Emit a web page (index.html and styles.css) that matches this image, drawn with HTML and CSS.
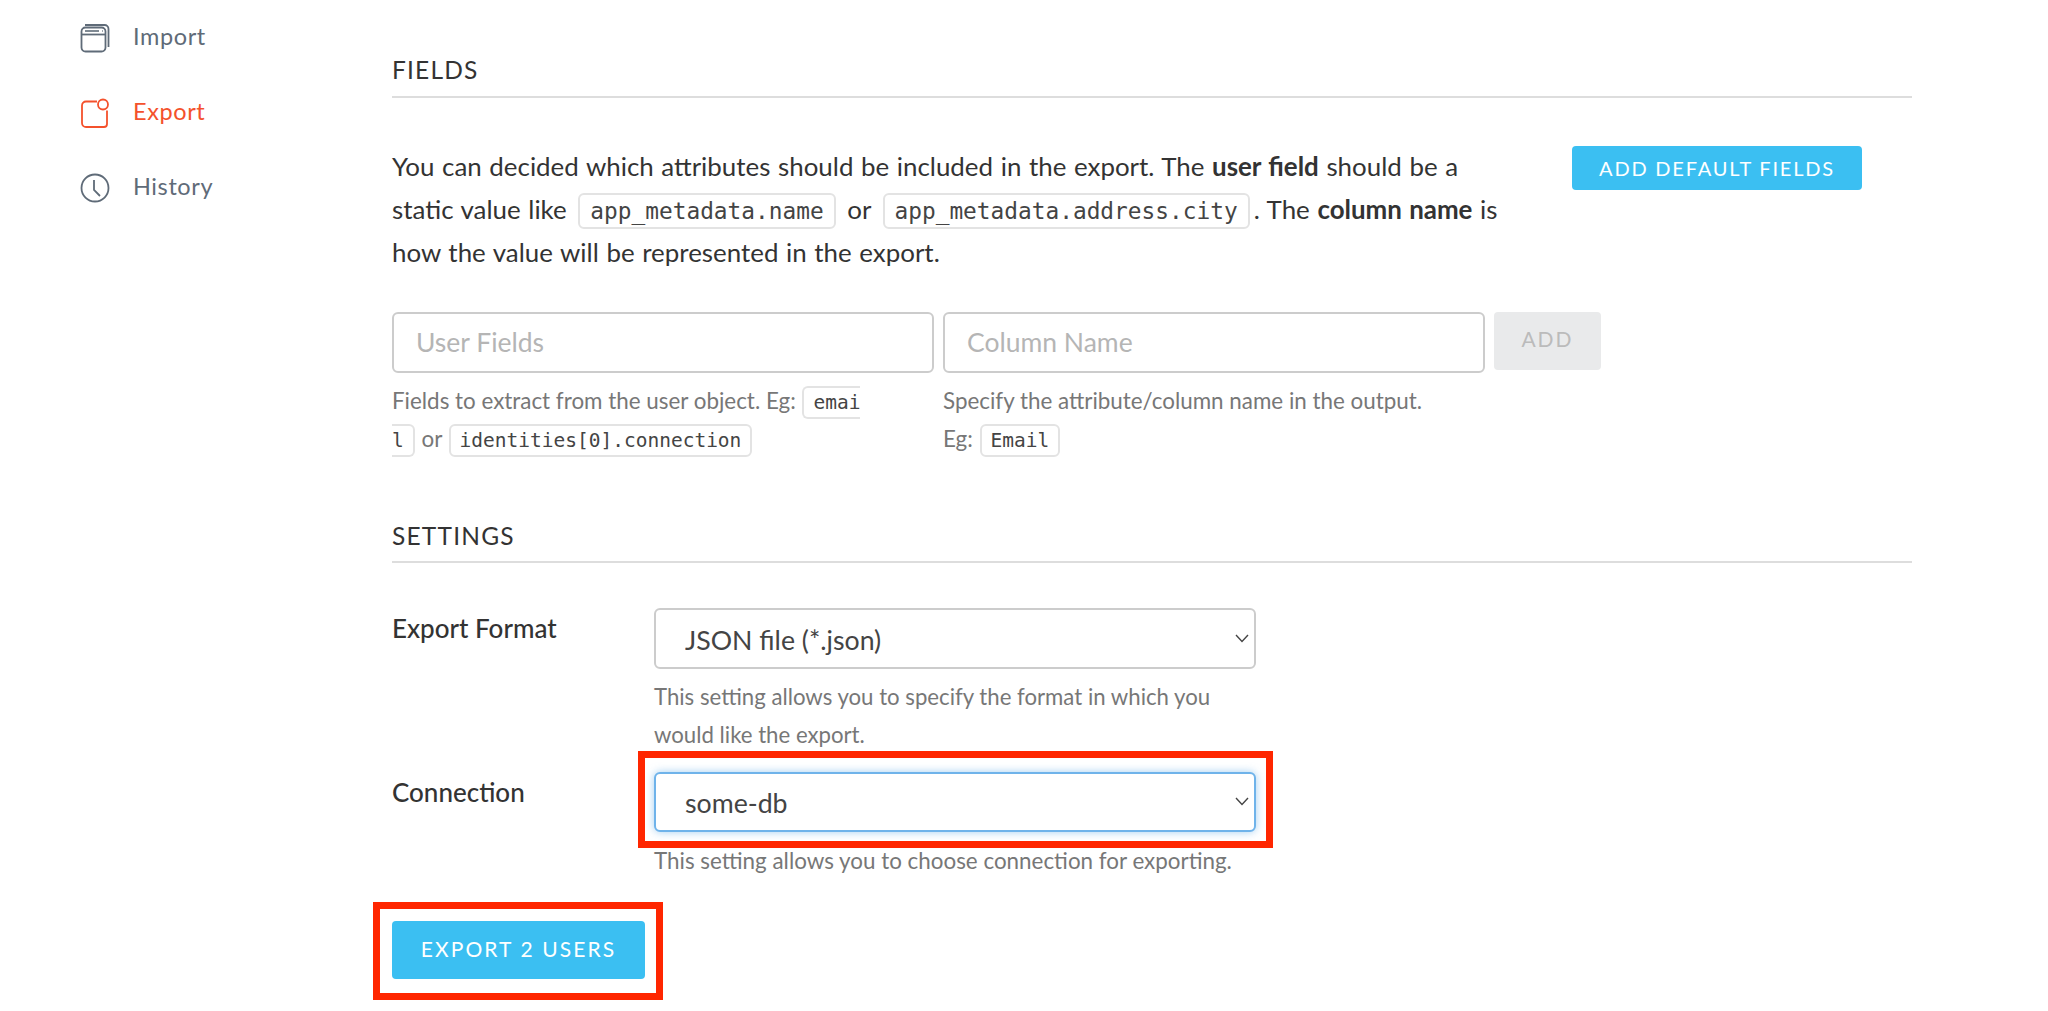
FILE: index.html
```html
<!DOCTYPE html>
<html lang="en">
<head>
<meta charset="utf-8">
<title>Export</title>
<link rel="stylesheet" href="styles.css">
</head>
<body>
<div class="page">
  <nav class="sidebar">
    <a class="nav-item">
      <svg class="nav-icon" viewBox="0 0 30 30" fill="none" stroke="currentColor" stroke-width="1.8"><rect x="1.5" y="4.5" width="24" height="24" rx="4"/><path d="M1.5 11.5h24"/><path d="M5 8h14" stroke-width="1.6"/><path d="M22 8h.8" stroke-width="1.6"/><path d="M5 2h19.5a4 4 0 0 1 4 4v18"/></svg>
      <span class="nav-label">Import</span>
    </a>
    <a class="nav-item nav-active">
      <svg class="nav-icon" viewBox="0 0 30 30" fill="none" stroke="currentColor" stroke-width="1.8"><path d="M17 3.5H6a4 4 0 0 0-4 4V25a4 4 0 0 0 4 4h18a3 3 0 0 0 3-3V12.5"/><circle cx="23" cy="6.5" r="5"/></svg>
      <span class="nav-label">Export</span>
    </a>
    <a class="nav-item">
      <svg class="nav-icon" viewBox="0 0 30 30" fill="none" stroke="currentColor" stroke-width="1.8"><circle cx="15" cy="15" r="13.5"/><path d="M14 7v10l6 6"/></svg>
      <span class="nav-label">History</span>
    </a>
  </nav>
  <main class="content">
    <h2 class="section-title first">FIELDS</h2>
    <div class="intro">
      <p class="intro-text">You can decided which attributes should be included in the export. The <strong>user field</strong> should be a static value like <code class="code">app_metadata.name</code> or <code class="code">app_metadata.address.city</code>. The <strong>column name</strong> is how the value will be represented in the export.</p>
      <button class="btn btn-small">ADD DEFAULT FIELDS</button>
    </div>
    <div class="field-row">
      <div class="field-col">
        <input class="input" placeholder="User Fields">
        <p class="help help-narrow">Fields to extract from the user object. Eg: <code class="code code-small">email</code> or <code class="code code-small">identities[0].connection</code></p>
      </div>
      <div class="field-col">
        <input class="input" placeholder="Column Name">
        <p class="help help-column">Specify the attribute/column name in the output. Eg: <code class="code code-small">Email</code></p>
      </div>
      <button class="btn-add">ADD</button>
    </div>
    <h2 class="section-title second">SETTINGS</h2>
    <div class="form-row row-format">
      <label class="form-label">Export Format</label>
      <div class="form-control">
        <div class="select-wrap">
          <select class="select"><option>JSON file (*.json)</option></select>
          <svg class="chevron" viewBox="0 0 14 9" fill="none" stroke="#444" stroke-width="1.4"><path d="M1 1l6 6.5L13 1"/></svg>
        </div>
        <p class="help help-select">This setting allows you to specify the format in which you would like the export.</p>
      </div>
    </div>
    <div class="form-row row-connection">
      <label class="form-label">Connection</label>
      <div class="form-control">
        <div class="select-wrap">
          <select class="select select-focus"><option>some-db</option></select>
          <svg class="chevron" viewBox="0 0 14 9" fill="none" stroke="#444" stroke-width="1.4"><path d="M1 1l6 6.5L13 1"/></svg>
          <div class="mark mark-select"></div>
        </div>
        <p class="help help-connection">This setting allows you to choose connection for exporting.</p>
      </div>
    </div>
    <div class="export-wrap">
      <button class="btn btn-export">EXPORT 2 USERS</button>
      <div class="mark mark-export"></div>
    </div>
  </main>
</div>
</body>
</html>
```
FILE: styles.css
```css
* { box-sizing: border-box; }
html, body { margin: 0; height: 1011px; overflow: hidden; background: #fff; }
body { font-family: Lato, "Open Sans", sans-serif; color: #333; }
.page { display: flex; width: 2048px; height: 1011px; }

.sidebar { width: 392px; flex: none; padding-left: 80px; display: flex; flex-direction: column; }
.nav-item { display: flex; align-items: center; height: 75px; gap: 23px; color: #5f6b78; font-size: 23.5px; letter-spacing: .6px; }
.nav-label { padding-bottom: 3px; }
.nav-active { color: #f4512c; }
.nav-icon { width: 30px; height: 30px; flex: none; }

.content { width: 1520px; flex: none; }
.section-title { margin: 0; font-size: 24.5px; font-weight: 400; line-height: 30px; letter-spacing: 1.2px; color: #333; padding-bottom: 11px; border-bottom: 2px solid #ddd; }
.first { margin-top: 55px; }
.second { margin-top: 63px; padding-bottom: 10px; }

.intro { display: flex; justify-content: space-between; align-items: flex-start; margin-top: 48px; padding-right: 50px; }
.intro-text { margin: -1px 0 0; width: 1112px; font-size: 25.9px; word-spacing: 1px; line-height: 43px; color: #333; }
.intro-text strong { font-weight: 700; }

.code { font-family: "DejaVu Sans Mono", monospace; font-size: 22.8px; line-height: 1; word-spacing: 0; color: #444; border: 2px solid #e3e3e3; border-radius: 6px; padding: 3px 10px; margin: 0 4px; word-break: break-all; background: #fff; }
.code-small { font-size: 19.5px; padding: 3px 9px; margin: 0 1px; }

.btn { display: block; border: 0; border-radius: 4px; background: #3bbff2; color: #fff; font-family: inherit; font-size: 20px; letter-spacing: 1.8px; }
.btn-small { width: 290px; height: 44px; flex: none; }
.btn-export { width: 253px; height: 58px; font-size: 21px; letter-spacing: 2.1px; padding-bottom: 4px; }

.field-row { display: flex; gap: 9px; margin-top: 38px; align-items: flex-start; }
.field-col { width: 542px; flex: none; }
.input { display: block; width: 100%; height: 61px; border: 2px solid #ccc; border-radius: 6px; padding: 0 22px 2px; font-family: inherit; font-size: 26.5px; color: #333; background: #fff; }
.input::placeholder { color: #b5b5b5; opacity: 1; }
.help { margin: 9px 0 0; font-size: 22.4px; line-height: 38px; color: #777; }
.help-narrow { width: 470px; }
.help-column { width: 490px; }
.help-select { font-size: 22.2px; }
.btn-add { width: 107px; height: 58px; flex: none; border: 0; border-radius: 4px; background: #e9eaeb; color: #bbb; font-family: inherit; font-size: 21px; letter-spacing: 2px; padding-bottom: 6px; }

.form-row { display: flex; }
.row-format { margin-top: 45px; }
.row-connection { margin-top: 18px; }
.form-label { width: 262px; flex: none; font-size: 26px; line-height: 30px; color: #333; font-weight: 500; }
.row-format .form-label { margin-top: 5px; }
.row-connection .form-label { margin-top: 5px; }
.form-control { width: 602px; flex: none; }
.select-wrap { position: relative; }
.select { display: block; width: 100%; height: 61px; appearance: none; border: 2px solid #ccc; border-radius: 6px; padding: 2px 29px 0; font-family: inherit; font-size: 26.7px; color: #444; background: #fff; outline: none; }
.row-connection .select { height: 60px; }
.select-focus { border-color: #6fb3ea; box-shadow: 0 0 8px rgba(102, 175, 233, .6); }
.chevron { position: absolute; right: 7px; top: 50%; width: 14px; height: 9px; margin-top: -5px; }
.help-connection { margin-top: 10px; }
.export-wrap { position: relative; width: 253px; margin-top: 41px; }

.mark { position: absolute; border: 7px solid #ff2600; pointer-events: none; }
.mark-select { left: -16px; right: -17px; top: -21px; bottom: -16px; }
.mark-export { left: -19px; right: -18px; top: -19px; bottom: -21px; }
```
